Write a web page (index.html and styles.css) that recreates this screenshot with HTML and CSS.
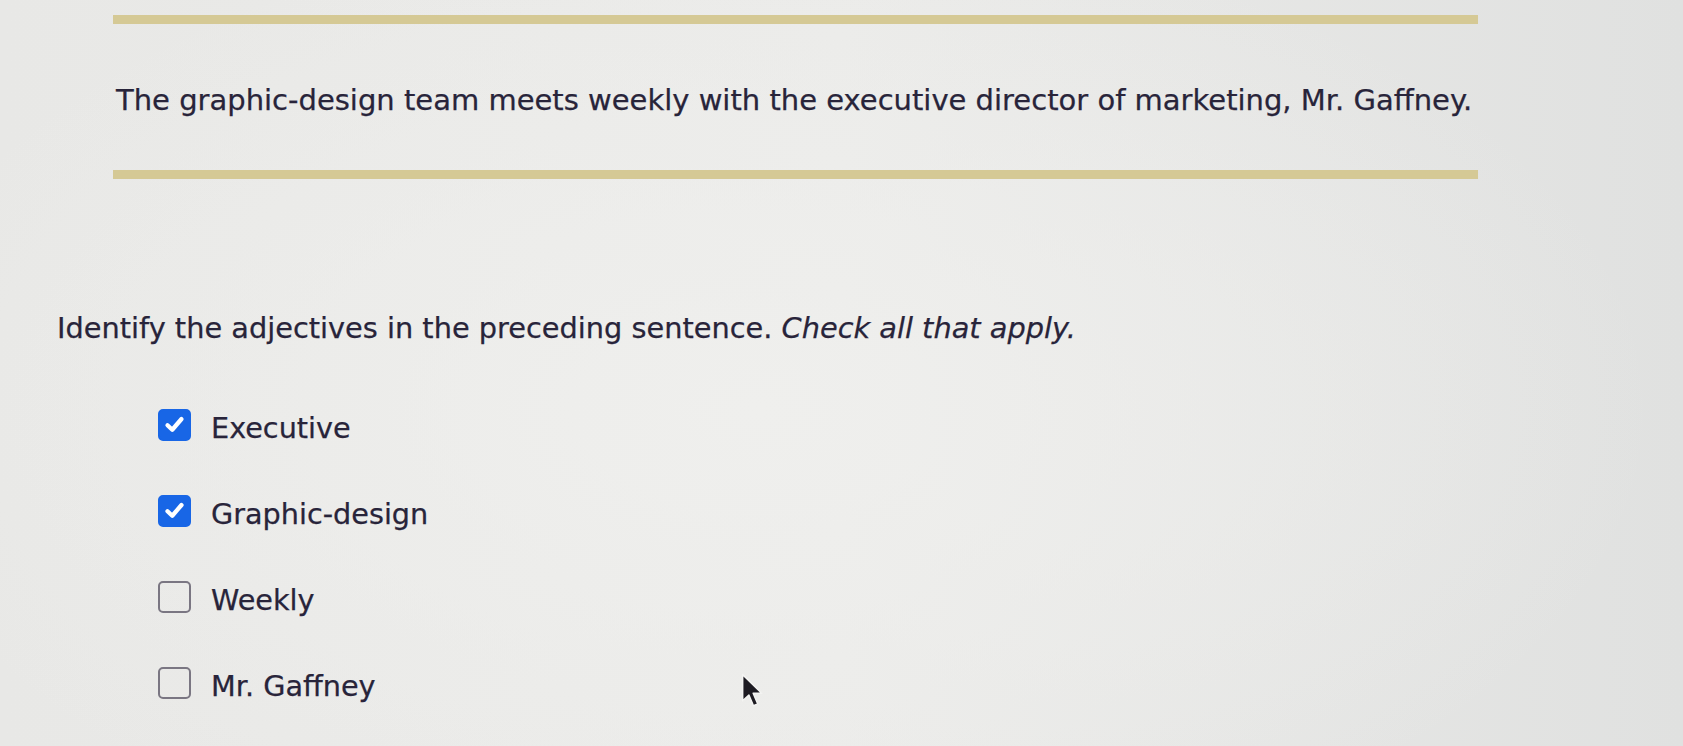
FILE: index.html
```html
<!DOCTYPE html>
<html lang="en">
<head>
<meta charset="utf-8">
<title>Adjectives</title>
<link rel="stylesheet" href="styles.css">
</head>
<body>
<main class="page">
  <section class="passage">
    <div class="rule"></div>
    <p class="sentence">The graphic-design team meets weekly with the executive director of marketing, Mr. Gaffney.</p>
    <div class="rule"></div>
  </section>

  <p class="prompt">Identify the adjectives in the preceding sentence. <em>Check all that apply.</em></p>

  <ul class="options">
    <li class="option">
      <span class="box checked">
        <svg viewBox="0 0 20 20" width="25" height="25"><path d="M4.4 10.6 L8.2 14.2 L15.6 5.6" fill="none" stroke="#fff" stroke-width="3.4" stroke-linecap="round" stroke-linejoin="round"/></svg>
      </span>
      <span class="label">Executive</span>
    </li>
    <li class="option">
      <span class="box checked">
        <svg viewBox="0 0 20 20" width="25" height="25"><path d="M4.4 10.6 L8.2 14.2 L15.6 5.6" fill="none" stroke="#fff" stroke-width="3.4" stroke-linecap="round" stroke-linejoin="round"/></svg>
      </span>
      <span class="label">Graphic-design</span>
    </li>
    <li class="option">
      <span class="box"></span>
      <span class="label">Weekly</span>
    </li>
    <li class="option">
      <span class="box"></span>
      <span class="label">Mr. Gaffney</span>
    </li>
  </ul>

  <svg class="pointer" viewBox="0 0 14 22" width="23" height="36">
    <path d="M1 1 L1 17 L4.8 13.4 L7.6 20 L10.2 18.9 L7.4 12.4 L12.6 12.4 Z" fill="#1d1b22" stroke="#f4f4f2" stroke-width="0.9" stroke-linejoin="round"/>
  </svg>
</main>
</body>
</html>
```

FILE: styles.css
```css
html, body {
  margin: 0;
  padding: 0;
}

body {
  width: 1683px;
  height: 746px;
  overflow: hidden;
  background:
    radial-gradient(ellipse 900px 500px at 45% 55%, #efefed 0%, rgba(239,239,237,0) 100%),
    linear-gradient(90deg, #e8e8e6 0%, #ebebe9 50%, #e0e1e0 100%);
  font-family: "DejaVu Sans", Verdana, sans-serif;
  color: #28243a;
  -webkit-text-stroke: 0.25px #28243a;
}

.page {
  position: relative;
  height: 100%;
}

.passage {
  margin-left: 113px;
  width: 1365px;
  padding-top: 15px;
}

.rule {
  height: 9px;
  background: #d5c995;
}

.sentence {
  margin: 58px 0 52px 3px;
  font-size: 29px;
  line-height: 36px;
}

.prompt {
  margin: 131px 0 0 57px;
  font-size: 28.8px;
  line-height: 36px;
}

.prompt em {
  font-style: italic;
}

.options {
  list-style: none;
  margin: 34px 0 0 158px;
  padding: 0;
}

.option {
  display: flex;
  align-items: center;
  height: 86px;
}

.box {
  box-sizing: border-box;
  width: 33px;
  height: 32px;
  margin-top: 3px;
  border: 2px solid #7a7682;
  border-radius: 5px;
  display: flex;
  align-items: center;
  justify-content: center;
  flex: none;
}

.box.checked {
  background: #1866e6;
  border-color: #1866e6;
}

.label {
  margin-left: 20px;
  margin-top: 9px;
  font-size: 28.7px;
  line-height: 34px;
}

.pointer {
  position: absolute;
  left: 741px;
  top: 673px;
}
```
